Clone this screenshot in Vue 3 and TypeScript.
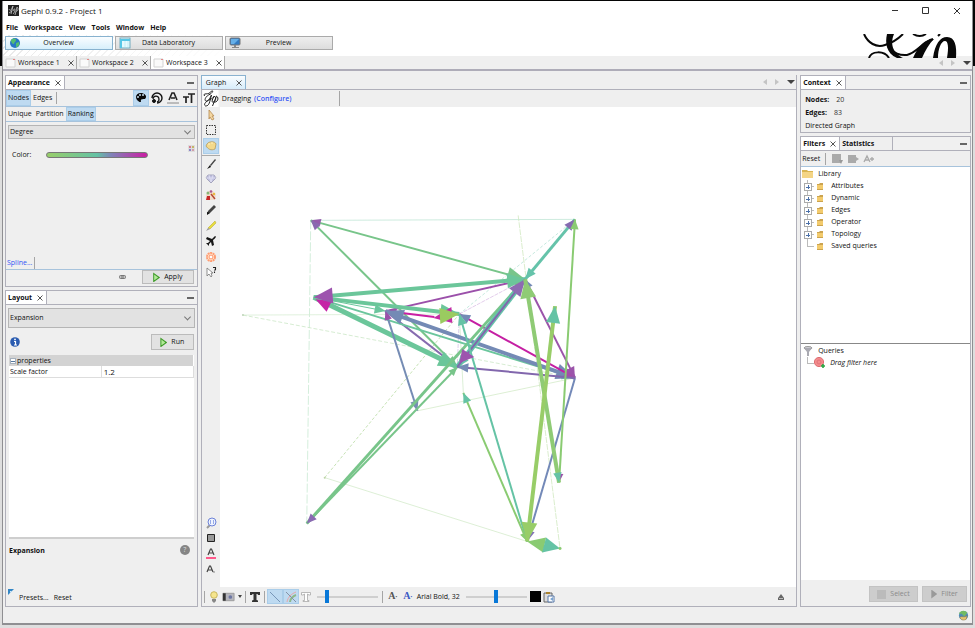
<script setup lang="ts">
import { ref } from 'vue'

type Point = [number, number]

interface Link {
  from: string
  to: string
  width: number
  color: string
  startHead?: [number, string]
  endHead?: [number, string]
}

const nodes: Record<string, Point> = {
  a: [310, 220], b: [575, 219], c: [313, 297], d: [385, 311], e: [242, 315],
  f: [525, 279], g: [459, 314], h: [457, 367], i: [575, 378], j: [555, 306],
  k: [417, 411], l: [306, 524], m: [324, 478], n: [527, 542], o: [560, 549],
  p: [559, 483], q: [463, 393], r: [434, 317], s: [518, 215],
}

const faint: [string, string, string, string][] = [
  ['a', 'b', '#c0e6d6', ''], ['a', 'l', '#c9ead3', '9 2'], ['e', 'g', '#d8edd4', ''],
  ['e', 'i', '#cbe7c6', '4 2'], ['m', 'g', '#b8dba2', '3 2'], ['m', 'n', '#d4ebcc', ''],
  ['k', 'i', '#d4ebc9', ''], ['g', 'b', '#b8e3d6', '3 2'], ['g', 'f', '#dcc0e6', '4 1'],
  ['g', 'h', '#d4c4e6', '4 1'], ['g', 'q', '#d2ebcc', ''], ['s', 'o', '#d0e8c0', '6 1'],
]

const links: Link[] = [
  { from: 'i', to: 'n', width: 2, color: '#7389b8', endHead: [11, '#8071b5'] },
  { from: 'a', to: 'f', width: 2, color: '#78c58a', startHead: [10, '#945bab'], endHead: [18, '#78c58a'] },
  { from: 'a', to: 'h', width: 2, color: '#78c58a', startHead: [10, '#8a68b0'], endHead: [11, '#78c58a'] },
  { from: 'd', to: 'f', width: 2, color: '#9b50aa', endHead: [10, '#9b50aa'] },
  { from: 'd', to: 'r', width: 2, color: '#c91fa4', startHead: [11, '#9b50aa'] },
  { from: 'd', to: 'h', width: 2, color: '#866baf', endHead: [10, '#78c58a'] },
  { from: 'c', to: 'i', width: 2, color: '#6bc69d', endHead: [13, '#6bc69d'] },
  { from: 'c', to: 'd', width: 1, color: '#6bc69d', endHead: [11, '#6bc69d'] },
  { from: 'd', to: 'i', width: 4, color: '#748ab5', startHead: [18, '#748ab5'], endHead: [19, '#748ab5'] },
  { from: 'g', to: 'i', width: 2, color: '#c51fa3', startHead: [11, '#748ab5'], endHead: [11, '#a44ba9'] },
  { from: 'c', to: 'h', width: 5, color: '#6bc69a', startHead: [18, '#c525a6'], endHead: [19, '#6bc69a'] },
  { from: 'c', to: 'g', width: 4, color: '#6bc69a', endHead: [19, '#6bc69a'] },
  { from: 'c', to: 'f', width: 4, color: '#6bc69a', startHead: [19, '#9d54ae'], endHead: [18, '#6bc69a'] },
  { from: 'd', to: 'k', width: 2, color: '#758cb4', startHead: [9, '#9b50aa'], endHead: [10, '#758cb4'] },
  { from: 'l', to: 'f', width: 3, color: '#78c58a', endHead: [11, '#78c58a'] },
  { from: 'l', to: 'h', width: 2, color: '#78c58a', startHead: [10, '#8a6bb2'], endHead: [9, '#78c58a'] },
  { from: 'f', to: 'h', width: 5, color: '#65c3aa', endHead: [12, '#65c3aa'] },
  { from: 'f', to: 'h', width: 2, color: '#8267ad', startHead: [17, '#8d6bb2'] },
  { from: 'f', to: 'i', width: 2, color: '#9b54aa', startHead: [9, '#758bb6'], endHead: [11, '#9b54aa'] },
  { from: 'f', to: 'b', width: 3, color: '#65c3aa', startHead: [11, '#65c3aa'], endHead: [11, '#866bb0'] },
  { from: 'h', to: 'i', width: 2, color: '#8267ad', startHead: [11, '#758bb6'] },
  { from: 'n', to: 'g', width: 2, color: '#65c3a5', endHead: [11, '#65c3a5'] },
  { from: 'n', to: 'q', width: 2, color: '#8acb72', startHead: [9, '#8acb72'], endHead: [10, '#65c3a5'] },
  { from: 'p', to: 'b', width: 2, color: '#8acb72', startHead: [9, '#9b54aa'], endHead: [10, '#8acb72'] },
  { from: 'f', to: 'p', width: 4, color: '#8fcb75', startHead: [19, '#8fcb75'], endHead: [10, '#65c3a5'] },
  { from: 'j', to: 'n', width: 4, color: '#98cd68', startHead: [17, '#65c3a5'], endHead: [19, '#98cd68'] },
]

function arrow(tip: Point, tail: Point, size: number): string {
  const dx = tail[0] - tip[0]
  const dy = tail[1] - tip[1]
  const length = Math.hypot(dx, dy)
  const ux = dx / length
  const uy = dy / length
  const half = size * 0.42
  const bx = tip[0] + ux * size
  const by = tip[1] + uy * size
  return `${tip[0]},${tip[1]} ${bx - uy * half},${by + ux * half} ${bx + uy * half},${by - ux * half}`
}

const workspaces = ['Workspace 1', 'Workspace 2', 'Workspace 3']
const menus = ['File', 'Workspace', 'View', 'Tools', 'Window', 'Help']
const library = ['Attributes', 'Dynamic', 'Edges', 'Operator', 'Topology', 'Saved queries']
const activeWorkspace = ref(2)
const scaleFactor = ref('1.2')
const edgeWeight = ref(15)
const labelSize = ref(50)
</script>

<template>
  <div class="desktop">
    <div class="window">
      <header class="titlebar">
        <svg class="app-icon" viewBox="0 0 11 11"><rect width="11" height="11" fill="#222" /><path d="M1 4C3 8 4 2 5 1L3 9M5 6C8 0 7 8 5 9M7 10L9 2C11 3 10 7 8 6M1 8L4 6" fill="none" stroke="#ddd" stroke-width=".7" /></svg>
        <h1>Gephi 0.9.2 - Project 1</h1>
        <div class="window-controls">
          <button aria-label="Minimize"><svg viewBox="0 0 8 8"><path d="M1 3.5H7" /></svg></button>
          <button aria-label="Maximize"><svg viewBox="0 0 8 8"><path d="M.5 .5H6.5V6.5H.5Z" /></svg></button>
          <button aria-label="Close"><svg viewBox="0 0 8 8"><path d="M1 1L7 7M7 1L1 7" /></svg></button>
        </div>
      </header>

      <nav class="menubar"><button v-for="menu in menus" :key="menu">{{ menu }}</button></nav>

      <div class="perspectives">
        <button class="perspective current">
          <svg viewBox="0 0 12 12"><circle cx="6" cy="6" r="5" fill="#2877c5" /><path d="M2 3C4 1 7 1 7 3C7 5 5 5 5 7C3 7 2 5 2 3M7 6L10 5C11 8 9 10 7 10Z" fill="#54bd72" /></svg>
          <span>Overview</span>
        </button>
        <button class="perspective">
          <svg viewBox="0 0 12 12"><rect x="1" y="1" width="10" height="10" fill="#e4fbff" stroke="#70aabd" /><path d="M1 2H11V4H1ZM1 4H3V11H1Z" fill="#56c7e6" /><path d="M6 4V11M9 4V11" stroke="#a3dce9" stroke-width=".5" /></svg>
          <span>Data Laboratory</span>
        </button>
        <button class="perspective">
          <svg viewBox="0 0 12 12"><rect x="1" y="1" width="10" height="7" rx="1" fill="#327ac2" stroke="#777" /><path d="M2 2H10L5 7H2Z" fill="#65afe8" /><path d="M5 8H7V10H10V11H3V10H5Z" fill="#888" /></svg>
          <span>Preview</span>
        </button>
        <svg class="brand" viewBox="0 0 98 24">
          <g fill="none" stroke="#080808">
            <path d="M3 0C7 9 15 14 24 11C34 8 39 3 42 0" stroke-width="2" />
            <path d="M8 24C10 17 23 16 28 24" stroke-width="2" />
            <path d="M29 0C24 12 32 22 46 21C56 19 61 8 72 5" stroke-width="2" />
            <path d="M52 0C57 3 62 2 65 0M79 0L77 2" stroke-width="2" />
          </g>
          <path d="M26 0H33C28 12 34 20 42 24H36C25 19 24 9 26 0M52 24C57 12 64 5 73 5C68 10 64 17 61 24ZM72 24C74 10 79 3 86 3C94 3 96 12 95 24H86C88 13 87 7 84 7C80 7 77 15 77 24Z" fill="#080808" />
        </svg>
      </div>

      <div class="workspace-tabs">
        <div v-for="(name, index) in workspaces" :key="name" class="workspace-tab" :class="{ active: activeWorkspace === index }">
          <button class="workspace-name" @click="activeWorkspace = index">
            <svg viewBox="0 0 11 10"><path d="M1 1H10V9H1Z" fill="#fafafa" stroke="#d3d3d3" /><path d="M8 1H10V2H8Z" fill="#e48787" /></svg>{{ name }}
          </button>
          <button class="close" :aria-label="`Close ${name}`"><svg viewBox="0 0 6 6"><path d="M.5 .5L5.5 5.5M5.5 .5L.5 5.5" /></svg></button>
        </div>
        <div class="tab-arrows"><i class="previous"></i><i class="next"></i><i class="down"></i></div>
      </div>

      <main class="docks">
        <div class="dock left-dock">
          <section class="panel appearance">
            <header class="panel-head"><h2 class="panel-tab">Appearance <button class="close" aria-label="Close Appearance"><svg viewBox="0 0 6 6"><path d="M.5 .5L5.5 5.5M5.5 .5L.5 5.5" /></svg></button></h2><button class="minimize" aria-label="Minimize Appearance"></button></header>
            <div class="element-row">
              <button class="text-tab selected">Nodes</button><button class="text-tab">Edges</button><i class="separator"></i>
              <div class="attribute-tools">
                <button class="selected" aria-label="Color"><svg viewBox="0 0 12 12"><path d="M6 1C1 1 0 5 2 8C4 10 6 11 6 9C5 7 8 7 10 7C13 4 9 1 6 1Z" fill="#080808" /><g fill="#c6dcee"><circle cx="3" cy="5" r="1" /><circle cx="5" cy="3" r="1" /><circle cx="8" cy="3" r="1" /></g></svg></button>
                <button aria-label="Size"><svg viewBox="0 0 12 12"><g fill="none" stroke="#111"><path d="M1 6A5 5 0 1 1 6 11" stroke-width="1.4" /><path d="M2 7A3 3 0 1 1 6 10" stroke-width="1.2" /><circle cx="3" cy="9" r="1.5" fill="#111" /></g></svg></button>
                <button aria-label="Label color"><svg viewBox="0 0 12 12"><path d="M2 8L5 1H7L10 8M4 6H8" fill="none" stroke="#222" stroke-width="1.6" /><path d="M0 11H12" stroke="#888" /></svg></button>
                <button aria-label="Label size"><svg viewBox="0 0 12 12"><path d="M5 2H12M8.5 2V11M0 5H6M3 5V11" fill="none" stroke="#222" stroke-width="1.7" /></svg></button>
              </div>
            </div>
            <div class="mode-row"><button class="text-tab">Unique</button><button class="text-tab">Partition</button><button class="text-tab selected">Ranking</button></div>
            <label class="combo slim"><select aria-label="Ranking attribute"><option>Degree</option></select></label>
            <div class="color-row"><span>Color:</span><i class="gradient"></i><button class="palette" aria-label="Choose palette"><svg viewBox="0 0 7 7"><path d="M0 0H7V7H0Z" fill="#ddd" /><path d="M1 1H3V3H1Z" fill="#d67d91" /><path d="M4 1H6V3H4Z" fill="#c4b568" /><path d="M1 4H3V6H1Z" fill="#8a85ca" /><path d="M4 4H6V6H4Z" fill="#d39eaa" /></svg></button></div>
            <div class="spline"><a href="#spline">Spline...</a><i class="separator"></i></div>
            <div class="apply-row"><svg class="chain" viewBox="0 0 7 4"><rect x=".5" y=".5" width="6" height="3" rx="1" fill="#c4c4c4" stroke="#777" /><path d="M2 2H5" stroke="#777" /></svg><button class="action apply"><i class="play"></i>Apply</button></div>
          </section>

          <section class="panel layout">
            <header class="panel-head"><h2 class="panel-tab">Layout <button class="close" aria-label="Close Layout"><svg viewBox="0 0 6 6"><path d="M.5 .5L5.5 5.5M5.5 .5L.5 5.5" /></svg></button></h2><button class="minimize" aria-label="Minimize Layout"></button></header>
            <label class="combo tall"><select aria-label="Layout algorithm"><option>Expansion</option></select></label>
            <div class="run-row"><svg viewBox="0 0 10 10"><circle cx="5" cy="5" r="4.8" fill="#2b5cb0" /><path d="M4 4.5H5.5V8M4 8H7" stroke="white" fill="none" stroke-width="1.2" /><circle cx="5" cy="2.4" r=".9" fill="white" /></svg><button class="action run"><i class="play"></i>Run</button></div>
            <div class="property-sheet">
              <table>
                <thead><tr><th colspan="2"><i class="fold"></i>properties</th></tr></thead>
                <tbody><tr><td><label for="scale">Scale factor</label></td><td><input id="scale" v-model="scaleFactor" /></td></tr></tbody>
              </table>
            </div>
            <div class="description"><strong>Expansion</strong><button class="help" aria-label="Help">?</button></div>
            <footer class="preset-row"><svg viewBox="0 0 6 6"><path d="M0 0H6L0 6Z" fill="#3386c5" /><path d="M2 2H4L2 4Z" fill="#cceaff" /></svg><button>Presets...</button><button>Reset</button></footer>
          </section>
        </div>

        <section class="graph-dock">
          <header class="graph-head">
            <h2 class="graph-tab">Graph <button class="close" aria-label="Close Graph"><svg viewBox="0 0 6 6"><path d="M.5 .5L5.5 5.5M5.5 .5L.5 5.5" /></svg></button></h2>
            <div class="tab-arrows"><i class="previous"></i><i class="next"></i><i class="down"></i></div>
          </header>
          <div class="graph-status">
            <svg viewBox="0 0 16 17"><rect width="16" height="17" fill="white" /><path d="M2 6C0 2 6 6 9 1C12 0 9 4 6 5C0 9 3 14 7 9L9 5C7 12 7 16 3 16C0 14 5 10 9 9L12 6C9 10 9 13 11 12C14 11 14 5 11 7M14 6C17 8 15 13 11 12M14 6L10 16" fill="none" stroke="#222" stroke-width="1" /></svg>
            <span>Dragging</span><a href="#configure">(Configure)</a><i class="separator"></i>
          </div>
          <div class="graph-body">
            <aside class="tool-rail">
              <div class="select-tools">
                <button aria-label="Direct selection"><svg viewBox="0 0 12 12"><path d="M4 1L9 7H7L9 10L7 11L5 8L4 10Z" fill="#f3d6a1" stroke="#b68a50" stroke-width=".8" /></svg></button>
                <button aria-label="Rectangle selection"><svg viewBox="0 0 12 12"><path d="M1.5 1.5H10.5V10.5H1.5Z" fill="none" stroke="#333" stroke-dasharray="1.5 1" /></svg></button>
                <button class="selected" aria-label="Drag"><svg viewBox="0 0 12 12"><path d="M2 4C4 1 10 1 11 4L10 9C6 11 3 9 1 6Z" fill="#f4d98a" stroke="#b89a58" stroke-width=".8" /><path d="M4 3L4 5M7 2V4" stroke="#fff0bd" /></svg></button>
              </div>
              <div class="edit-tools">
                <button aria-label="Painter"><svg viewBox="0 0 12 12"><path d="M10 1L5 7L6 8L11 2Z" fill="#444" /><path d="M5 7L2 11L6 9Z" fill="#111" /></svg></button>
                <button aria-label="Sizer"><svg viewBox="0 0 12 12"><path d="M3 2H9L11 5L6 10L1 5Z" fill="#c0c0e0" stroke="#a5a5bd" /><path d="M1 5H11M4 2L6 9L8 2" stroke="#ededfa" fill="none" stroke-width=".6" /></svg></button>
                <button aria-label="Brush"><svg viewBox="0 0 12 12"><path d="M2 3L6 1L9 3L11 7L9 11H2L1 6Z" fill="#f0dccb" /><circle cx="3" cy="4" r="1.5" fill="#87b578" /><circle cx="6" cy="2.5" r="1.3" fill="#a85992" /><circle cx="9" cy="5" r="1.3" fill="#e9b93f" /><path d="M2 7H5V11H1Z" fill="#c72727" /><path d="M6 5L10 10" stroke="#b64a32" stroke-width="1.5" /></svg></button>
                <button aria-label="Node pencil"><svg viewBox="0 0 12 12"><path d="M9 1L11 3L5 9L2 10L3 7Z" fill="#444" /><path d="M2 8V11L5 9Z" fill="#111" /></svg></button>
                <button aria-label="Edge pencil"><svg viewBox="0 0 12 12"><path d="M10 1L11 3L5 9L3 8Z" fill="#e7dd3d" stroke="#b4a52a" stroke-width=".5" /><path d="M3 8L1 11L5 9" fill="#999" /></svg></button>
                <button aria-label="Shortest path"><svg viewBox="0 0 12 12"><path d="M10 1C12 1 10 4 8 5L9 10L7 11L6 7L4 9L4 11L2 9L1 8L3 8L5 6L1 4L2 2L7 4Z" fill="#161616" /></svg></button>
                <button aria-label="Heat map"><svg viewBox="0 0 12 12"><circle cx="6" cy="6" r="4" fill="#fff0dc" stroke="#ff9c72" stroke-width="2" stroke-dasharray="2 .5" /><circle cx="6" cy="6" r="2" fill="#fff" stroke="#ff8e60" /></svg></button>
                <button aria-label="Edit"><svg viewBox="0 0 12 12"><path d="M2 2V10L4 8L6 11L7 10L6 7H8Z" fill="white" stroke="#777" stroke-width=".8" /><path d="M8 1.5H10.5V3.5L9.5 4.5M9.5 5.5V7" stroke="#222" fill="none" stroke-width="1.1" /></svg></button>
              </div>
              <div class="view-tools">
                <button aria-label="Center graph"><svg viewBox="0 0 12 12"><path d="M5 8L2 11" stroke="#999" stroke-width="2" /><circle cx="7" cy="5" r="4" fill="#eef3ff" stroke="#6c82d7" /><path d="M5 4H6M8 4H9M5 6H6M8 6H9" stroke="#4064d2" stroke-width="1.2" /></svg></button>
                <button aria-label="Reset colors"><svg viewBox="0 0 12 12"><path d="M2.5 2.5H9.5V9.5H2.5Z" fill="#999" stroke="#222" /></svg></button>
                <button aria-label="Reset label colors"><svg viewBox="0 0 12 12"><path d="M3 7L5.5 1H6.5L9 7M4 5H8" fill="none" stroke="#444" stroke-width="1.2" /><path d="M1 10H11" stroke="#ff487f" stroke-width="1.8" /></svg></button>
                <button aria-label="Reset label visibility"><svg viewBox="0 0 12 12"><path d="M2 9L4.5 3H5.5L8 9M3 7H7" fill="none" stroke="#444" stroke-width="1.2" /><path d="M8 9H10" stroke="#888" /></svg></button>
              </div>
            </aside>
            <svg class="network" viewBox="219 107 578 480" role="img" aria-label="Directed network">
              <line v-for="(edge, index) in faint" :key="`faint${index}`" :x1="nodes[edge[0]][0]" :y1="nodes[edge[0]][1]" :x2="nodes[edge[1]][0]" :y2="nodes[edge[1]][1]" :stroke="edge[2]" :stroke-dasharray="edge[3] || undefined" stroke-width=".8" />
              <g v-for="(link, index) in links" :key="index">
                <line :x1="nodes[link.from][0]" :y1="nodes[link.from][1]" :x2="nodes[link.to][0]" :y2="nodes[link.to][1]" :stroke="link.color" :stroke-width="link.width" />
                <polygon v-if="link.startHead" :points="arrow(nodes[link.from], nodes[link.to], link.startHead[0])" :fill="link.startHead[1]" />
                <polygon v-if="link.endHead" :points="arrow(nodes[link.to], nodes[link.from], link.endHead[0])" :fill="link.endHead[1]" />
              </g>
              <polygon points="459,363 462,349 474,357" fill="#9d54ae" />
              <polygon points="433,318 451,307 452,323" fill="#c42aa6" />
              <polygon points="459,314 439,308 440,324" fill="#9acb60" />
              <polygon points="527,542 546,538 543,553" fill="#8acb72" />
              <polygon points="560,549 546,538 542,553" fill="#65c3a5" />
              <circle cx="560" cy="549" r="1.5" fill="#8acb72" />
              <circle cx="242" cy="315" r="1" fill="#bed4b9" /><circle cx="324" cy="478" r="1" fill="#bed4a8" />
            </svg>
          </div>
          <footer class="graph-footer">
            <i class="separator"></i>
            <button aria-label="Background color"><svg viewBox="0 0 12 12"><circle cx="6" cy="4" r="3.3" fill="#f5e58e" stroke="#c9b75e" /><path d="M4 8H8V10L6 12L4 10Z" fill="#888" /></svg></button>
            <button class="camera" aria-label="Take screenshot"><svg viewBox="0 0 14 12"><path d="M1 2H13V10H1Z" fill="#b5b5bd" stroke="#999" /><path d="M1 2H4V10H1Z" fill="#333" /><circle cx="9" cy="6" r="2" fill="#6c76a2" /></svg><i class="down"></i></button>
            <i class="separator"></i>
            <button aria-label="Show node labels"><svg viewBox="0 0 12 12"><path d="M1 1H11V4H9L8.5 3H7.5V9L9 9.5V11H3V9.5L4.5 9V3H3.5L3 4H1Z" fill="#333" /></svg></button>
            <i class="separator"></i>
            <div class="edge-modes"><button class="selected" aria-label="Show edges"><svg viewBox="0 0 12 12"><path d="M1 1L11 11" stroke="#7896b8" /></svg></button><button class="selected" aria-label="Color edges"><svg viewBox="0 0 12 12"><path d="M2 11C3 6 6 3 11 1" fill="none" stroke="#e9a5a5" /><path d="M5 11C5 8 8 5 11 4" fill="none" stroke="#8fb98a" stroke-width="2" /><path d="M1 1L11 11" stroke="#8592a5" /></svg></button></div>
            <button aria-label="Show edge labels"><svg viewBox="0 0 12 12"><path d="M1.5 1.5H10.5V4H8.5L8 3H7.5V9.5H9V10.5H3V9.5H4.5V3H4L3.5 4H1.5Z" fill="#fff" stroke="#aaa" stroke-width=".8" /></svg></button>
            <input v-model="edgeWeight" class="slider first-slider" type="range" aria-label="Edge weight" />
            <i class="separator"></i>
            <button class="letter" aria-label="Size mode">A<small>•</small></button><button class="letter blue" aria-label="Color mode">A<small>•</small></button>
            <button class="font-name">Arial Bold, 32</button>
            <input v-model="labelSize" class="slider" type="range" aria-label="Label size" />
            <button class="swatch" aria-label="Label color"></button>
            <button aria-label="Attributes"><svg viewBox="0 0 12 12"><path d="M1 2H9V11H1Z" fill="#ddd" stroke="#666" /><path d="M3 1H7V3H3Z" fill="#a9822f" /><path d="M5 5H11V11H5Z" fill="#fff" stroke="#5477a8" /><path d="M7 8L10 6V10Z" fill="#77a2d0" /></svg></button>
            <button class="eject" aria-label="Expand options"><svg viewBox="0 0 8 8"><path d="M1 5L4 1L7 5V7H1Z" fill="#666" /><path d="M2 5.5H6" stroke="#ddd" stroke-width=".7" /></svg></button>
          </footer>
        </section>

        <div class="dock right-dock">
          <section class="panel context">
            <header class="panel-head"><h2 class="panel-tab">Context <button class="close" aria-label="Close Context"><svg viewBox="0 0 6 6"><path d="M.5 .5L5.5 5.5M5.5 .5L.5 5.5" /></svg></button></h2><button class="minimize" aria-label="Minimize Context"></button></header>
            <dl><div><dt>Nodes:</dt><dd>20</dd></div><div><dt>Edges:</dt><dd>83</dd></div></dl>
            <p>Directed Graph</p>
          </section>
          <section class="panel filters">
            <header class="panel-head"><h2 class="panel-tab">Filters <button class="close" aria-label="Close Filters"><svg viewBox="0 0 6 6"><path d="M.5 .5L5.5 5.5M5.5 .5L.5 5.5" /></svg></button></h2><h2 class="panel-tab inactive">Statistics</h2><button class="minimize" aria-label="Minimize Filters"></button></header>
            <div class="filter-tools">
              <button>Reset</button><i class="separator"></i>
              <svg viewBox="0 0 12 12"><path d="M1 1H10V10H1Z" fill="#aaa" /><path d="M8 7H12L10 11Z" fill="#999" /></svg>
              <svg viewBox="0 0 12 12"><path d="M1 2H9V10H1ZM9 4L12 6L9 8Z" fill="#aaa" /></svg>
              <svg viewBox="0 0 12 12"><path d="M1 9L4 3L7 9M2 7H6M7 6H11M9 4V8" fill="none" stroke="#aaa" stroke-width="1.3" /></svg>
            </div>
            <div class="library">
              <div class="tree-root"><svg viewBox="0 0 12 10"><path d="M0 1H5L6 2H11V9H0Z" fill="#d9b553" /><path d="M0 3H11V9H0Z" fill="#f4d586" /></svg>Library</div>
              <ul>
                <li v-for="(item, index) in library" :key="item" :class="{ leaf: index === library.length - 1 }"><i class="branch"></i><svg viewBox="0 0 8 7"><path d="M1 1H3L4 0H7V7H1Z" fill="#cba34f" /><path d="M1 2H7V6H1Z" fill="#f3cb6d" /></svg>{{ item }}</li>
              </ul>
            </div>
            <div class="queries">
              <div class="tree-root"><svg viewBox="0 0 12 10"><ellipse cx="6" cy="2" rx="4" ry="1.5" fill="#d1d1d8" stroke="#999" /><path d="M2 2L5 6V10H7V6L10 2Z" fill="#aaaab2" /></svg>Queries</div>
              <div class="drop-target"><i></i><svg viewBox="0 0 12 12"><circle cx="5" cy="5" r="4.6" fill="#f38c8c" stroke="#dc6d72" /><circle cx="5" cy="5" r="2" fill="none" stroke="#e2727a" /><path d="M9 7V11M7 9H11" stroke="#29a543" stroke-width="1.6" /></svg><em>Drag filter here</em></div>
            </div>
            <footer class="filter-actions"><button disabled><i class="stop"></i>Select</button><button disabled><i class="gray-play"></i>Filter</button></footer>
          </section>
        </div>
      </main>
      <footer class="statusbar"><button aria-label="Updates"><svg viewBox="0 0 12 12"><circle cx="6" cy="6" r="5" fill="#508bb5" /><path d="M1 4C3 0 8 0 10 3L7 7L4 4Z" fill="#72bb62" /><path d="M2 8C4 6 7 9 10 6L9 10C6 12 3 11 2 8Z" fill="#e5c36e" stroke="#847143" stroke-width=".5" /></svg></button></footer>
    </div>
  </div>
</template>

<style>
body { background: #ececec; }
</style>

<style scoped>
* { box-sizing: border-box; }
button, input, select { font: inherit; color: inherit; }
button { border: 0; padding: 0; background: none; white-space: nowrap; }
h1, h2, p, dl, dd, ul { margin: 0; padding: 0; }
svg { display: block; flex-shrink: 0; }
i { flex-shrink: 0; }
a { color: #3355f5; text-decoration: none; }
.desktop { min-height: 100vh; padding: 1px 2px 3px; display: flex; background: linear-gradient(#050505 66px, #dedede 66px); font: 7px/12px "Open Sans", "Noto Sans", sans-serif; color: #111; }
.window { flex: 1; min-width: 0; display: flex; flex-direction: column; background: #efefef; border: 1px solid #8f8f92; border-width: 0 1px 2px; }
.titlebar { height: 20px; background: #fff; display: flex; align-items: flex-start; padding: 4px 0 0 5px; gap: 2px; }
.titlebar h1 { font-size: 8px; font-weight: 400; line-height: 12px; }
.app-icon { width: 11px; height: 11px; }
.window-controls { margin-left: auto; display: flex; }
.window-controls button { width: 31px; height: 12px; display: grid; place-items: center; }
.window-controls svg { width: 8px; height: 8px; fill: none; stroke: #333; }
.menubar { height: 14px; background: #fff; display: flex; gap: 6px; padding-left: 3px; font-weight: 700; }
.perspectives { height: 21px; padding: 1px 13px 0 2px; display: flex; align-items: flex-start; gap: 2px; background: linear-gradient(90deg, transparent, #fff 230px), repeating-linear-gradient(135deg, #fff 0 4px, #e9e9e9 4px 5px); }
.perspective { width: 108px; height: 14px; border: 1px solid #aaa; background: linear-gradient(#eee, #ddd); display: flex; align-items: center; }
.perspective.current { background: linear-gradient(#fafdff, #d7effb); border-color: #87b2cf; }
.perspective svg { width: 12px; height: 12px; margin-left: 3px; }
.perspective span { flex: 1; margin-right: 16px; text-align: center; }
.brand { width: 98px; height: 24px; margin: -2px 0 0 auto; }
.workspace-tabs { height: 15px; display: flex; border-bottom: 2px solid #aeacb8; }
.workspace-tab { width: 74px; display: flex; align-items: center; border-right: 1px solid #aaa; }
.workspace-tab.active { background: #fff; }
.workspace-name { flex: 1; display: flex; align-items: center; gap: 2px; padding-left: 2px; }
.workspace-name svg { width: 11px; height: 10px; }
.close { margin: 0 3px; }
.close svg { width: 6px; height: 6px; fill: none; stroke: #555; }
.workspace-tab .close { margin-right: 2px; }
.tab-arrows { margin-left: auto; display: flex; align-items: center; gap: 8px; padding-right: 1px; }
.previous, .next { width: 0; height: 0; border: 3px solid transparent; }
.previous { border-right: 4px solid #c4c4c4; border-left: 0; }
.next { border-left: 4px solid #c4c4c4; border-right: 0; }
.down { width: 0; height: 0; border: 4px solid transparent; border-top-color: #444; border-bottom: 0; }
.docks { flex: 1; min-height: 0; display: grid; grid-template-columns: 193fr 597fr 171fr; gap: 3px; padding: 4px 1px 0 2px; }
.dock { min-width: 0; display: flex; flex-direction: column; gap: 3px; }
.panel { min-height: 0; display: flex; flex-direction: column; border: 1px solid #b0b0ba; }
.panel-head { flex: none; height: 14px; display: flex; border-bottom: 1px solid #b0b0ba; background: #f0f0f0; }
.panel-tab { display: flex; align-items: center; gap: 2px; padding-left: 2px; border-right: 1px solid #b0b0ba; background: #fff; font-size: 7px; line-height: 13px; }
.panel-tab.inactive { background: #efefef; padding-right: 18px; }
.minimize { width: 7px; height: 2px; margin: auto 3px auto auto; background: #666; }
.appearance { flex: 212; }
.layout { flex: 317; }
.element-row, .mode-row { flex: none; display: flex; align-items: stretch; border-bottom: 1px solid #a7c3dc; }
.element-row { height: 17px; }
.mode-row { height: 15px; }
.text-tab { padding: 0 2px; }
.selected { background: #bedaf1; box-shadow: inset 0 0 0 1px #aacde9; }
.separator { width: 1px; height: 12px; background: #a5a5a5; margin: auto 2px; }
.attribute-tools { margin-left: auto; display: flex; }
.attribute-tools button { width: 16px; display: grid; place-items: center; }
.attribute-tools svg { width: 12px; height: 12px; }
.combo { flex: none; margin: 3px 2px 0; border: 1px solid #b5b5b5; background: #e2e2e2; display: flex; position: relative; }
.combo::after { content: ""; position: absolute; right: 4px; top: 50%; width: 4px; height: 4px; border: solid #777; border-width: 0 1px 1px 0; transform: translateY(-70%) rotate(45deg); pointer-events: none; }
.combo select { width: 100%; border: 0; appearance: none; background: none; padding: 0 1px; outline: 0; }
.slim { height: 14px; }
.tall { height: 20px; }
.color-row { height: 22px; display: flex; align-items: center; padding: 10px 1px 0 6px; }
.gradient { width: 102px; height: 6px; margin-left: 15px; border: 1px solid #777; border-radius: 3px; background: linear-gradient(90deg, #99ce6a, #64c2a5 50%, #7f83b8 64%, #cc1da4); }
.palette { margin: -14px 1px 0 auto; }
.palette svg { width: 7px; height: 7px; }
.spline { height: 13px; margin-top: auto; display: flex; border-bottom: 1px solid #a7c3dc; padding-left: 1px; }
.apply-row { height: 16px; display: flex; justify-content: flex-end; align-items: flex-start; gap: 16px; padding-right: 3px; }
.chain { width: 7px; height: 4px; margin-top: 5px; }
.action { height: 14px; display: flex; align-items: center; justify-content: center; gap: 4px; border: 1px solid #bbb; background: #e2e2e2; }
.play { width: 7px; height: 10px; background: #3f9c29; clip-path: polygon(0 0, 100% 50%, 0 100%); position: relative; }
.play::after { content: ""; position: absolute; inset: 2px 2px 2px 1px; background: #b2e998; clip-path: polygon(0 0, 100% 50%, 0 100%); }
.apply { width: 52px; }
.run-row { height: 26px; display: flex; justify-content: space-between; align-items: center; padding: 2px 3px 0 4px; }
.run-row svg { width: 10px; height: 10px; }
.run { width: 43px; height: 16px; }
.property-sheet { flex: 1; min-height: 0; margin: 1px 3px 0; background: #fff; border-bottom: 2px solid #cecece; }
table { width: 100%; border-collapse: collapse; table-layout: fixed; }
th { text-align: left; font-weight: 400; background: #d3d3d3; padding: 0; height: 11px; line-height: 11px; }
td { height: 11px; line-height: 10px; padding: 0 1px; border-bottom: 1px solid #ddd; border-right: 1px solid #ddd; }
td input { width: 100%; height: 10px; display: block; border: 0; padding: 0 1px; background: transparent; font-size: 8px; outline: 0; }
.fold { display: inline-block; width: 6px; height: 6px; border: 1px solid #a5b0bd; margin: 0 1px; vertical-align: -1px; background: linear-gradient(#55789f, #55789f) center / 4px 1px no-repeat, #fff; }
.description { height: 50px; padding: 6px 7px 0 3px; display: flex; justify-content: space-between; align-items: flex-start; }
.help { width: 10px; height: 10px; line-height: 10px; border-radius: 50%; background: #858585; color: #ddd; }
.preset-row { height: 17px; padding-left: 2px; display: flex; gap: 5px; }
.preset-row svg { width: 6px; height: 6px; }
.graph-dock { min-width: 0; display: flex; flex-direction: column; border: 1px solid #b0b0ba; border-top: 0; }
.graph-head { height: 15px; display: flex; border-bottom: 1px solid #b0b0ba; }
.graph-tab { width: 45px; margin-left: -1px; padding: 0 0 0 4px; border: 1px solid #8ab2d0; border-bottom: 0; background: linear-gradient(#fafdff, #d7ecfa); display: flex; align-items: center; justify-content: space-between; font-size: 7px; font-weight: 400; }
.graph-status { height: 17px; display: flex; align-items: center; gap: 3px; background: #efefef; }
.graph-status > svg { width: 17px; height: 17px; }
.graph-status a { font-weight: 600; }
.graph-status .separator { margin-left: 44px; height: 15px; }
.graph-body { flex: 1; min-height: 0; display: flex; background: #fff; }
.network { flex: 1; min-width: 0; width: 100%; height: 100%; }
.tool-rail { width: 18px; padding-bottom: 10px; display: flex; flex-direction: column; background: #efefef; }
.tool-rail > div { display: grid; grid-auto-rows: 1fr; }
.tool-rail button { display: grid; place-items: center; margin: 0 1px; }
.tool-rail svg { width: 12px; height: 12px; }
.select-tools { height: 47px; }
.edit-tools { height: 125px; border-top: 1px solid #aaa; margin-top: 1px; }
.view-tools { height: 62px; margin-top: auto; }
.graph-footer { height: 19px; display: flex; align-items: center; background: #efefef; }
.graph-footer > button:not(.camera) svg, .edge-modes svg { width: 12px; height: 12px; }
.graph-footer > button { margin: 0 1px; }
.camera { display: flex; align-items: center; gap: 3px; }
.camera svg { width: 13px; height: 12px; }
.camera .down { border-width: 3px 2px 0; }
.edge-modes { display: flex; }
.edge-modes button { width: 16px; height: 15px; display: grid; place-items: center; }
.slider { width: 61px; height: 14px; appearance: none; background: linear-gradient(#cfcfcf, #cfcfcf) center / 100% 2px no-repeat; margin: 0 2px; }
.slider::-webkit-slider-thumb { appearance: none; width: 4px; height: 13px; background: #0878d8; border: 0; }
.first-slider { margin-left: 4px; }
.graph-footer .letter { width: 12px; margin: 0 1px 0 2px; font-family: "Liberation Serif", serif; font-size: 10px; font-weight: 700; color: #555; }
.letter small { font-size: 5px; vertical-align: 1px; }
.graph-footer .letter.blue { color: #3b5ac4; }
.graph-footer .font-name { margin: 0 4px 0 2px; }
.swatch { width: 11px; height: 11px; background: #000; }
.graph-footer .eject { margin: 0 11px 0 auto; }
.graph-footer > .eject:not(.camera) svg { width: 8px; height: 8px; }
.context { flex: none; height: 58px; }
.context dl, .context p { padding-left: 4px; line-height: 13px; }
.context dl { padding-top: 3px; }
.context dl div { display: flex; gap: 7px; }
.context dt { font-weight: 700; }
.context dd { color: #333; }
.filters { flex: 1; }
.filter-tools { height: 16px; flex: none; display: flex; align-items: center; gap: 3px; padding-left: 1px; border-bottom: 1px solid #a7c3dc; }
.filter-tools svg { width: 12px; height: 12px; margin-right: 1px; }
.library { flex: 177; background: #fff; }
.tree-root { display: flex; align-items: center; gap: 4px; padding-left: 1px; height: 13px; }
.tree-root svg { width: 12px; height: 10px; }
.library ul { list-style: none; }
.library li { display: flex; align-items: center; height: 12px; padding-left: 3px; }
.library li svg { width: 8px; height: 7px; margin: 0 7px 0 2px; }
.branch { width: 10px; height: 12px; background: linear-gradient(#bbb, #bbb) 0 6px / 10px 1px no-repeat, linear-gradient(#bbb, #bbb) 3px 0 / 1px 12px no-repeat; position: relative; }
.branch::after { content: ""; position: absolute; left: 0; top: 3px; width: 6px; height: 6px; border: 1px solid #aaa; background: linear-gradient(#4b70aa, #4b70aa) center / 4px 1px no-repeat, linear-gradient(#4b70aa, #4b70aa) center / 1px 4px no-repeat, #fff; }
.leaf .branch { background: linear-gradient(#bbb, #bbb) 3px 6px / 7px 1px no-repeat, linear-gradient(#bbb, #bbb) 3px 0 / 1px 7px no-repeat; }
.leaf .branch::after { display: none; }
.queries { flex: 237; background: #fff; border-top: 1px solid #888; }
.drop-target { display: flex; align-items: center; height: 12px; padding-left: 6px; }
.drop-target i { width: 7px; height: 7px; border: solid #bbb; border-width: 0 0 1px 1px; margin-top: -6px; }
.drop-target svg { width: 12px; height: 12px; margin-right: 4px; }
.filter-actions { height: 26px; flex: none; display: flex; justify-content: flex-end; align-items: center; gap: 4px; padding: 2px 3px 0 0; }
.filter-actions button { height: 16px; width: 49px; display: flex; align-items: center; justify-content: center; gap: 4px; background: #cdcdcd; border: 1px solid #c3c3c3; color: #8a8a8a; }
.filter-actions button:last-child { width: 45px; }
.stop { width: 9px; height: 9px; background: #bbb; }
.gray-play { width: 6px; height: 9px; background: #999; clip-path: polygon(0 0, 100% 50%, 0 100%); }
.statusbar { height: 16px; display: flex; justify-content: flex-end; align-items: center; padding-right: 3px; }
.statusbar svg { width: 11px; height: 11px; }
</style>
